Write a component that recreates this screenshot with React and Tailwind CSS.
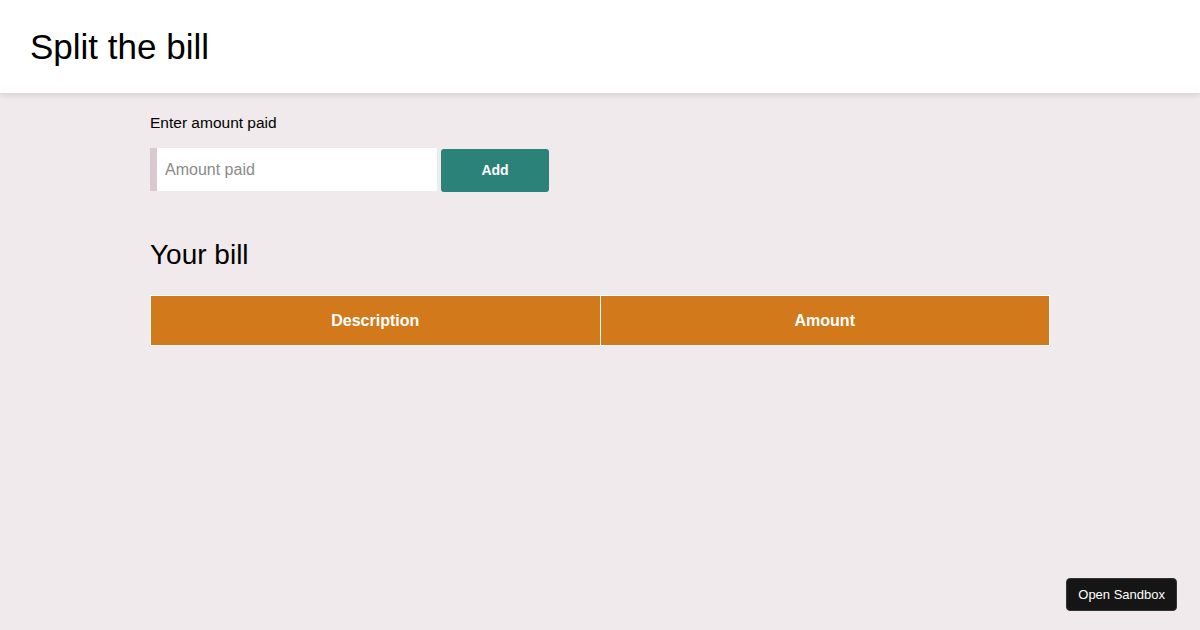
import React from 'react';

const App = () => {
  return (
    <div className="min-h-[630px] bg-[#f0eaec] font-['Liberation_Sans',Arial,sans-serif] text-black relative">
      {/* Header */}
      <header className="h-[93px] bg-white shadow-[0_2px_6px_rgba(0,0,0,0.12)] flex items-center px-[30px]">
        <h1 className="text-[35px] leading-none pb-[1px]">Split the bill</h1>
      </header>

      <main className="w-[900px] mx-auto pt-[21px]">
        <label className="block text-[15.5px] leading-[18px]">Enter amount paid</label>
        <div className="flex items-start gap-[4px] mt-[16px]">
          <input
            placeholder="Amount paid"
            className="w-[287px] h-[43px] bg-white border-l-[7px] border-[#d9c9d0] pl-[8px] text-[16px] placeholder-[#8a8a8a] outline-none"
          />
          <button className="w-[108px] h-[43px] mt-[1px] bg-[#2b8279] text-white text-[14px] font-bold rounded-[3px]">
            Add
          </button>
        </div>

        <h2 className="text-[28px] leading-none mt-[49px]">Your bill</h2>

        <table className="w-full mt-[26px] border-collapse">
          <thead>
            <tr>
              <th className="w-1/2 h-[50px] bg-[#d27a1b] border border-white text-white text-[16px] font-bold">Description</th>
              <th className="w-1/2 h-[50px] bg-[#d27a1b] border border-white text-white text-[16px] font-bold">Amount</th>
            </tr>
          </thead>
          <tbody></tbody>
        </table>
      </main>

      <button className="absolute right-[23px] bottom-[19px] h-[33px] px-[11px] bg-[#151515] text-white text-[13px] rounded-[4px] border border-[#333]">
        Open Sandbox
      </button>
    </div>
  );
};

export default App;
